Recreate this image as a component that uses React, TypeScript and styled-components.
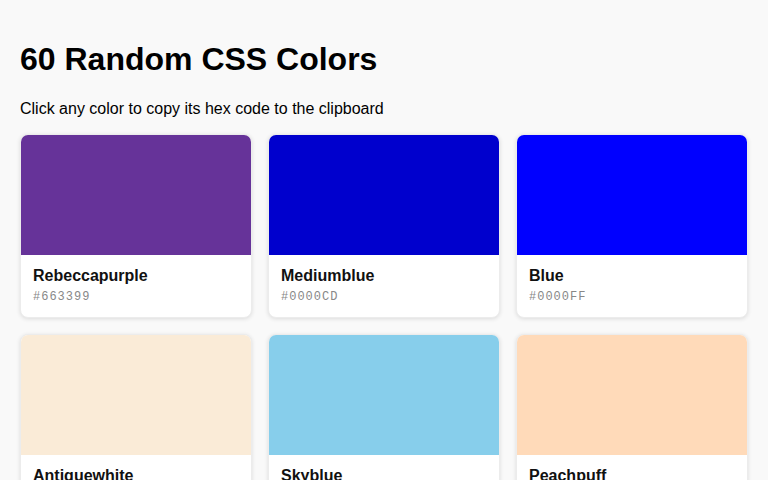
import styled, { createGlobalStyle } from "styled-components";

const GlobalStyle = createGlobalStyle`
  body {
    margin: 0;
    background: #f9f9f9;
    font-family: "Liberation Sans", Arial, sans-serif;
    color: #000;
  }
`;

const Page = styled.div`
  padding: 20px;
`;

const Title = styled.h1`
  font-size: 32px;
  font-weight: bold;
  margin: 21px 0 22px;
`;

const Subtitle = styled.p`
  font-size: 16px;
  margin: 16px 0 16px;
`;

const Grid = styled.div`
  display: grid;
  grid-template-columns: repeat(3, 1fr);
  gap: 16px;
`;

const Card = styled.div`
  background: #fff;
  border: 1px solid #ececec;
  border-radius: 8px;
  overflow: hidden;
  box-shadow: 0 1px 4px rgba(0, 0, 0, 0.12);
  cursor: pointer;
`;

const Swatch = styled.div<{ $color: string }>`
  height: 120px;
  background: ${(p) => p.$color};
`;

const Info = styled.div`
  padding: 12px 12px 13px;
`;

const Name = styled.div`
  font-size: 16px;
  font-weight: bold;
  color: #111;
`;

const Hex = styled.div`
  margin-top: 5px;
  font-family: "Liberation Mono", "Courier New", monospace;
  font-size: 12px;
  letter-spacing: 1px;
  color: #888;
`;

const colors: [string, string][] = [
  ["Rebeccapurple", "#663399"],
  ["Mediumblue", "#0000CD"],
  ["Blue", "#0000FF"],
  ["Antiquewhite", "#FAEBD7"],
  ["Skyblue", "#87CEEB"],
  ["Peachpuff", "#FFDAB9"],
  ["Tomato", "#FF6347"],
  ["Seagreen", "#2E8B57"],
  ["Goldenrod", "#DAA520"],
];

export default function App() {
  return (
    <>
      <GlobalStyle />
      <Page>
        <Title>60 Random CSS Colors</Title>
        <Subtitle>Click any color to copy its hex code to the clipboard</Subtitle>
        <Grid>
          {colors.map(([name, hex]) => (
            <Card key={name}>
              <Swatch $color={hex} />
              <Info>
                <Name>{name}</Name>
                <Hex>{hex}</Hex>
              </Info>
            </Card>
          ))}
        </Grid>
      </Page>
    </>
  );
}
